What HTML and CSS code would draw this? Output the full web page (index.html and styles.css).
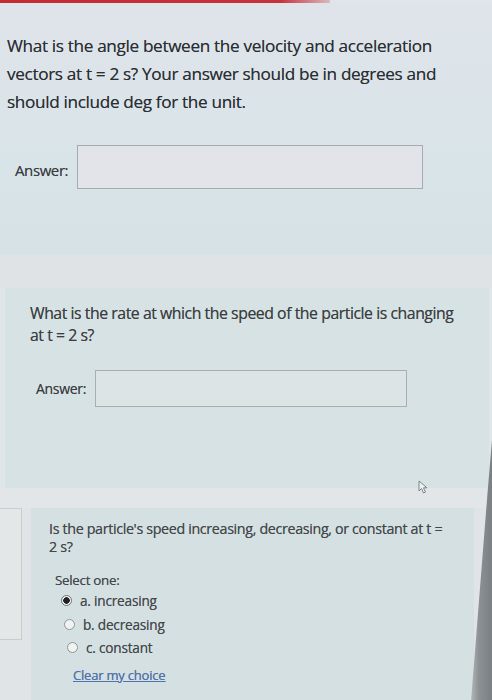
FILE: index.html
```html
<!DOCTYPE html>
<html>
<head>
<meta charset="utf-8">
<link rel="stylesheet" href="styles.css">
</head>
<body>
<div class="topbar"></div>
<section class="q1">
  <p class="qtext">What is the angle between the velocity and acceleration vectors at t = 2 s? Your answer should be in degrees and should include deg for the unit.</p>
  <div class="answer"><span class="label">Answer:</span><span class="input"></span></div>
</section>
<div class="strip"></div>
<section class="q2">
  <p class="qtext">What is the rate at which the speed of the particle is changing at t = 2 s?</p>
  <div class="answer"><span class="label">Answer:</span><span class="input"></span></div>
</section>
<div class="gap">
  <svg class="cursor" width="12" height="14" viewBox="0 0 12 14"><path d="M1 1 L1 11 L3.5 8.5 L5.5 13 L7.5 12 L5.5 7.8 L9 7.8 Z" fill="#eef0f1" stroke="#7d8387" stroke-width="1"/></svg>
</div>
<div class="q3wrap">
  <div class="side"></div>
  <section class="q3">
    <p class="qtext">Is the particle's speed increasing, decreasing, or constant at t =<br>2&nbsp;s?</p>
    <p class="prompt">Select one:</p>
    <div class="opt opt-a"><span class="radio checked"></span><span>a. increasing</span></div>
    <div class="opt opt-b"><span class="radio"></span><span>b. decreasing</span></div>
    <div class="opt opt-c"><span class="radio"></span><span>c. constant</span></div>
    <a class="clear" href="#">Clear my choice</a>
  </section>
  <div class="edge"></div>
</div>
</body>
</html>
```

FILE: styles.css
```css
html, body {
  margin: 0;
  padding: 0;
}
body {
  width: 492px;
  height: 700px;
  overflow: hidden;
  background: #dfe5e9;
  font-family: "Open Sans", "Noto Sans", sans-serif;
  color: #3a3d40;
  position: relative;
  text-shadow: 0 0 0.5px rgba(40, 44, 48, 0.6);
}
.topbar {
  height: 3px;
  width: 330px;
  background: linear-gradient(90deg, #c42b33 0%, #c8323c 85%, rgba(210,120,130,0.4) 100%);
}
.qtext {
  margin: 0;
}
.q1 {
  padding: 29px 0 0 7px;
  height: 252px;
  box-sizing: border-box;
  background: linear-gradient(180deg, #dfe4ea 0%, #d9e4e9 60%, #d7e2e6 100%);
}
.q1 .qtext {
  font-size: 17.2px;
  line-height: 28px;
  letter-spacing: -0.35px;
  width: 470px;
  color: #2b2e32;
}
.answer {
  display: flex;
  align-items: center;
}
.q1 .answer {
  margin-top: 29px;
  padding-left: 8px;
  gap: 2px;
}
.q1 .label {
  font-size: 15px;
  width: 60px;
  letter-spacing: -0.4px;
  padding-top: 5px;
}
.q1 .input {
  width: 344px;
  height: 42px;
  border: 1px solid #a6abaf;
  background: #e3e3ea;
}
.strip {
  height: 33px;
  background: #dfe3e6;
}
.q2 {
  margin: 0 3px 0 5px;
  height: 200px;
  box-sizing: border-box;
  padding: 14px 0 0 25px;
  background: #d6e2e3;
}
.q2 .qtext {
  font-size: 15.8px;
  line-height: 22px;
  letter-spacing: -0.45px;
  color: #3c3f42;
  width: 440px;
}
.q2 .answer {
  margin-top: 24px;
  padding-left: 6px;
}
.q2 .label {
  font-size: 14px;
  width: 59px;
  letter-spacing: -0.3px;
}
.q2 .input {
  width: 310px;
  height: 35px;
  border: 1px solid #a9aeb0;
  background: #dde4e6;
}
.gap {
  height: 20px;
  background: #e2e6e8;
  position: relative;
}
.cursor {
  position: absolute;
  left: 418px;
  top: -8px;
}
.q3wrap {
  display: flex;
  height: 195px;
  background: #e0e4e6;
}
.side {
  width: 21px;
  height: 130px;
  border-top: 1px solid #c9cdd0;
  border-right: 1px solid #c7cccf;
  border-bottom: 1px solid #c7cccf;
  background: #e4e7e8;
}
.q3 {
  margin-left: 9px;
  width: 443px;
  box-sizing: border-box;
  padding: 12px 0 0 18px;
  background: #d4e0e1;
  color: #45484b;
}
.q3 .qtext {
  font-size: 14.3px;
  line-height: 18px;
  letter-spacing: -0.35px;
  width: 410px;
}
.prompt {
  margin: 15px 0 0 6px;
  font-size: 13.4px;
  line-height: 18px;
  letter-spacing: -0.3px;
}
.opt {
  display: flex;
  align-items: center;
  gap: 8px;
  height: 23.5px;
  font-size: 13.6px;
  letter-spacing: -0.2px;
}
.opt-a { padding-left: 12px; }
.opt-b { padding-left: 15px; }
.opt-c { padding-left: 18px; }
.radio {
  width: 11px;
  height: 11px;
  border-radius: 50%;
  border: 1px solid #8e9699;
  background: #f1f3f3;
  box-sizing: border-box;
}
.radio.checked {
  border: 1px solid #6f7578;
  background: radial-gradient(circle, #222 0 3px, #f1f3f3 3.5px);
}
.clear {
  display: inline-block;
  margin: 6px 0 0 24px;
  font-size: 13px;
  color: #4f74b3;
  text-decoration: underline;
  letter-spacing: -0.2px;
}
.edge {
  position: absolute;
  right: 0;
  top: 440px;
  width: 22px;
  height: 260px;
  background: linear-gradient(90deg, #b6bbbe 0%, #8c9194 40%, #7a7f83 100%);
  clip-path: polygon(100% 0, 100% 100%, 5% 100%, 80% 20%);
}
```
